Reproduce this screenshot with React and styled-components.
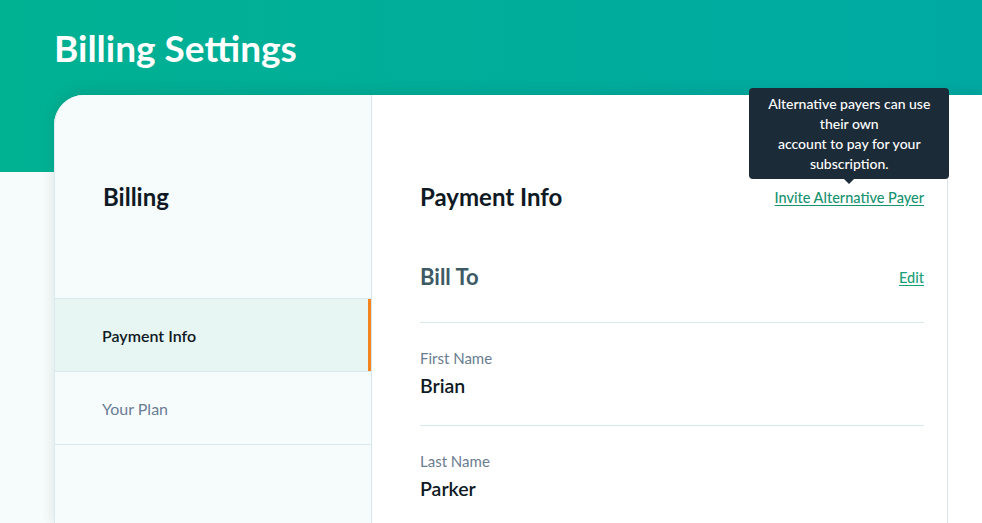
import React from 'react'
import styled, { createGlobalStyle } from 'styled-components';

const GlobalStyle = createGlobalStyle`
  body {
    margin: 0;
    font-family: Lato, "Noto Sans", sans-serif;
    color: #0f1a24;
  }
`;

const Page = styled.div`
  min-height: 100vh;
  background:
    linear-gradient(90deg, #00b192 0%, #00ad9c 60%, #00aaa3 100%) top / 100% 172px no-repeat,
    #f6fbfb;
  overflow: hidden;
`;

const Title = styled.h1`
  margin: 0;
  padding: 28px 0 0 54px;
  height: 95px;
  box-sizing: border-box;
  font-size: 37px;
  line-height: 40px;
  font-weight: 700;
  color: #fff;
`;

const Card = styled.div`
  margin-left: 54px;
  display: grid;
  grid-template-columns: 318px 576px 1fr;
  min-height: calc(100vh - 95px);
  background: #fff;
  border-top-left-radius: 30px;
  box-shadow: 0 -4px 14px rgba(0, 60, 60, 0.12);
`;

const Sidebar = styled.aside`
  background: #f6fbfc;
  border-left: 1px solid #dce9ee;
  border-right: 1px solid #d6e6ec;
  border-top-left-radius: 30px;
  padding-top: 88px;
`;

const SideHeading = styled.h2`
  margin: 0 0 87px 48px;
  font-size: 24px;
  line-height: 28px;
  font-weight: 700;
`;

const NavItem = styled.div`
  height: 72px;
  display: flex;
  align-items: center;
  padding-left: 47px;
  border-top: 1px solid #d8e9ee;
  font-size: 16px;
  font-weight: ${p => (p.$active ? 600 : 400)};
  color: ${p => (p.$active ? '#0f1a24' : '#6a7d96')};
  background: ${p => (p.$active ? '#e8f6f3' : 'transparent')};
  box-shadow: ${p => (p.$active ? 'inset -3px 0 0 #f5841f' : 'none')};
  &:last-child {
    border-bottom: 1px solid #d8e9ee;
  }
`;

const Main = styled.main`
  padding: 88px 23px 0 48px;
  border-right: 1px solid #d6e6ec;
`;

const Row = styled.div`
  display: flex;
  align-items: center;
  justify-content: space-between;
`;

const PanelTitle = styled.h2`
  margin: 0;
  font-size: 24px;
  line-height: 28px;
  font-weight: 700;
`;

const LinkWrap = styled.span`
  position: relative;
  top: -1px;
`;

const TextLink = styled.a`
  font-size: ${p => p.$size || 14.5}px;
  font-weight: 500;
  color: ${p => p.$color || '#17936f'};
  text-decoration: underline;
  text-underline-offset: 2px;
  cursor: pointer;
`;

const Tooltip = styled.div`
  position: absolute;
  bottom: calc(100% + 8px);
  left: 50%;
  transform: translateX(-50%);
  width: 200px;
  box-sizing: border-box;
  padding: 6px 10px 4px;
  background: #1c2b38;
  color: #fff;
  border-radius: 4px;
  font-size: 14px;
  line-height: 20.25px;
  font-weight: 500;
  text-align: center;
  z-index: 5;
  &::after {
    content: '';
    position: absolute;
    top: 100%;
    left: 50%;
    margin-left: -5px;
    border: 5px solid transparent;
    border-top-color: #1c2b38;
  }
`;

const Section = styled.section`
  margin-top: 52px;
`;

const SectionHead = styled(Row)`
  padding-bottom: 31px;
  border-bottom: 1px solid #d8e9ee;
`;

const SectionTitle = styled.h3`
  margin: 0;
  font-size: 22px;
  line-height: 28px;
  font-weight: 700;
  color: #3e5a64;
`;

const Field = styled.div`
  padding: 25px 0 27px;
  border-bottom: 1px solid #d8e9ee;
  &:last-child {
    border-bottom: none;
  }
`;

const Label = styled.div`
  font-size: 15px;
  line-height: 20px;
  color: #6a7c90;
  margin-bottom: 6px;
`;

const Value = styled.div`
  font-size: 19.5px;
  line-height: 24px;
  font-weight: 600;
  color: #0f1a24;
`;

const fields = [
  { label: 'First Name', value: 'Brian' },
  { label: 'Last Name', value: 'Parker' },
];

const App = () => {
  return (
    <Page>
      <GlobalStyle />
      <Title>Billing Settings</Title>
      <Card>
        <Sidebar>
          <SideHeading>Billing</SideHeading>
          <NavItem $active>Payment Info</NavItem>
          <NavItem>Your Plan</NavItem>
        </Sidebar>
        <Main>
          <Row>
            <PanelTitle>Payment Info</PanelTitle>
            <LinkWrap>
              <Tooltip>
                Alternative payers can use their own
                <br />
                account to pay for your subscription.
              </Tooltip>
              <TextLink>Invite Alternative Payer</TextLink>
            </LinkWrap>
          </Row>
          <Section>
            <SectionHead>
              <SectionTitle>Bill To</SectionTitle>
              <TextLink $color="#18a078">Edit</TextLink>
            </SectionHead>
            {fields.map(f => (
              <Field key={f.label}>
                <Label>{f.label}</Label>
                <Value>{f.value}</Value>
              </Field>
            ))}
          </Section>
        </Main>
        <div />
      </Card>
    </Page>
  )
}

export default App
